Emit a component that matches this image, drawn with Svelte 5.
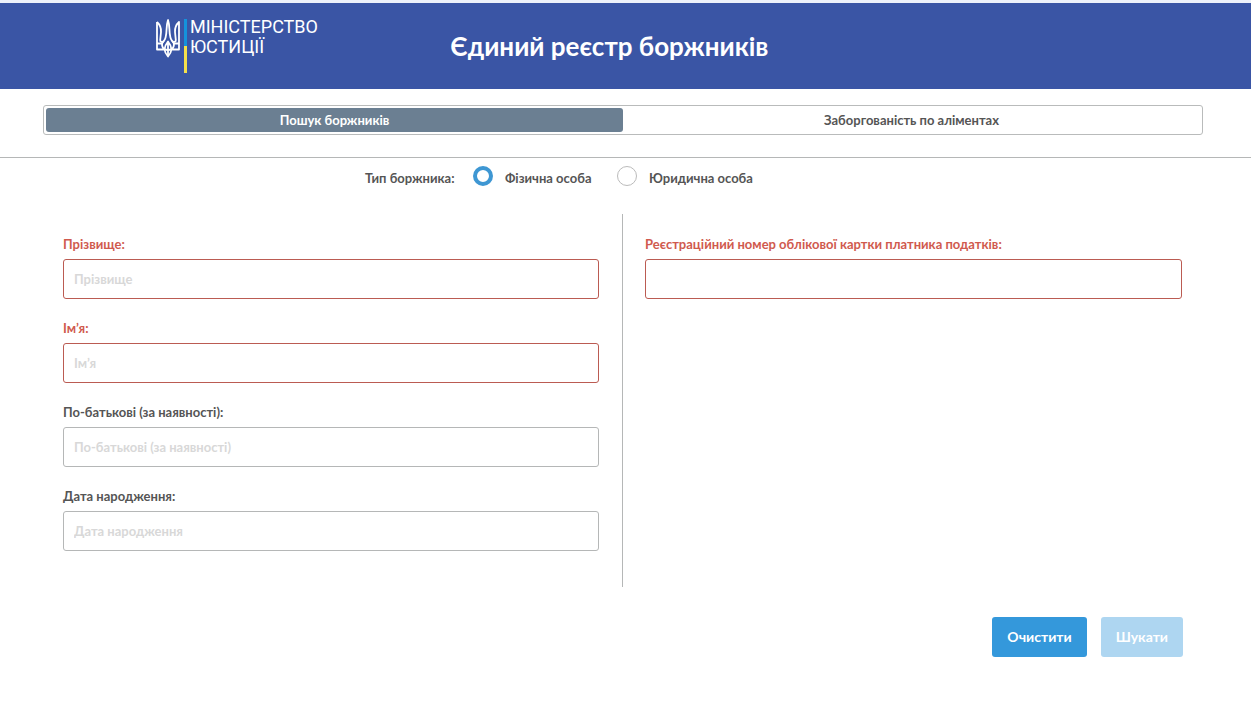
<script>
	let tab = $state('search');
	let debtorType = $state('person');
	let form = $state({ surname: '', name: '', patronymic: '', birthday: '', code: '' });

	const fields = [
		{ id: 'surname', label: 'Прізвище', required: true },
		{ id: 'name', label: 'Ім’я', required: true },
		{ id: 'patronymic', label: 'По-батькові (за наявності)', required: false },
		{ id: 'birthday', label: 'Дата народження', required: false }
	];

	const canSearch = $derived(Boolean((form.surname && form.name) || form.code));

	function clear() {
		form = { surname: '', name: '', patronymic: '', birthday: '', code: '' };
	}
</script>

<header class="header">
	<div class="logo">
		<svg class="trident" viewBox="0 0 25 40" aria-hidden="true">
			<g fill="none" stroke="#fff" stroke-width="1.8" stroke-linejoin="round">
				<!-- outer tines and base -->
				<path d="M1.500 3v27.500H9c.4 3 1.600 4.800 3.500 7 1.900-2.200 3.100-4 3.500-7h7.500V3c-3.200 3-4.300 6-4 10l.8 8c.2 2.200-2.800 2.800-3.600.8" />
				<path d="M1.500 3c3.200 3 4.300 6 4 10l-.8 8c-.2 2.200 2.800 2.800 3.600.8" />
				<!-- middle tine -->
				<path d="M12.500 1c-1 3-1.300 6-1.400 9-.2 6-.7 10.500-3.200 12.500-1.300 1.200-1.600 3-1.100 4.800.5 2.200 2.300 3.700 5.700 3.700s5.200-1.500 5.700-3.700c.5-1.800.2-3.600-1.100-4.800-2.500-2-3-6.500-3.200-12.500-.1-3-.4-6-1.400-9z" />
				<path d="M1.500 24.500h5M18.500 24.500h5M12.500 22v15M9 30.500c.1-3.200 1.500-5.500 3.500-8 2 2.500 3.400 4.800 3.500 8" />
			</g>
		</svg>
		<span class="flag"></span>
		<span class="ministry">МІНІСТЕРСТВО<br />ЮСТИЦІЇ</span>
	</div>
	<h1>Єдиний реєстр боржників</h1>
</header>

<nav class="tabs-bar">
	<div class="tabs">
		<button type="button" class:active={tab === 'search'} onclick={() => (tab = 'search')}>
			Пошук боржників
		</button>
		<button type="button" class:active={tab === 'alimony'} onclick={() => (tab = 'alimony')}>
			Заборгованість по аліментах
		</button>
	</div>
</nav>

<form class="page" onsubmit={(e) => e.preventDefault()}>
	<div class="types" role="radiogroup" aria-labelledby="type-title">
		<span id="type-title" class="types-title">Тип боржника:</span>
		<label class="option">
			<input type="radio" name="type" value="person" bind:group={debtorType} />
			<span>Фізична особа</span>
		</label>
		<label class="option">
			<input type="radio" name="type" value="company" bind:group={debtorType} />
			<span>Юридична особа</span>
		</label>
	</div>

	<div class="columns">
		<div class="column">
			{#each fields as field (field.id)}
				<div class="field" class:required={field.required}>
					<label for={field.id}>{field.label}:</label>
					<input id={field.id} type="text" placeholder={field.label} bind:value={form[field.id]} />
				</div>
			{/each}
		</div>
		<div class="column">
			<div class="field required">
				<label for="code">Реєстраційний номер облікової картки платника податків:</label>
				<input id="code" type="text" bind:value={form.code} />
			</div>
		</div>
	</div>

	<div class="actions">
		<button type="button" onclick={clear}>Очистити</button>
		<button type="submit" disabled={!canSearch}>Шукати</button>
	</div>
</form>

<style>
	:global(body) {
		background: #fff;
		color: #555;
		font-family: Lato, 'Open Sans', sans-serif;
		font-size: 13px;
		font-weight: 700;
		line-height: 16px;
	}

	button,
	input {
		box-sizing: border-box;
		margin: 0;
		font: inherit;
	}

	button {
		border: 0;
		cursor: pointer;
	}

	.header {
		display: grid;
		grid-template-columns: 36% 1fr;
		align-items: center;
		height: 86px;
		border-top: 3px solid #edf1fa;
		background: #3a55a5;
		color: #fff;
	}

	.logo {
		display: flex;
		align-items: flex-start;
		gap: 3px;
		padding-left: 155px;
	}

	.trident {
		width: 26px;
		height: 40px;
	}

	.flag {
		width: 3px;
		height: 54px;
		background: linear-gradient(#1492dc 50%, #f4e04b 50%);
	}

	.ministry {
		margin-top: -2px;
		font-family: Roboto, sans-serif;
		font-size: 18px;
		font-weight: 400;
		line-height: 20px;
	}

	h1 {
		margin: 0;
		font-size: 26px;
		line-height: 32px;
	}

	.tabs-bar {
		padding: 16px 48px 22px 43px;
		border-bottom: 1px solid #b5b7b7;
	}

	.tabs {
		display: grid;
		grid-template-columns: 1fr 1fr;
		padding: 2px;
		border: 1px solid #b9bbbb;
		border-radius: 3px;
	}

	.tabs button {
		height: 24px;
		padding: 0;
		border-radius: 3px;
		background: none;
		color: #555;
	}

	.tabs .active {
		background: #6b7f92;
		color: #fff;
	}

	.page {
		padding: 8px 48px 24px 43px;
	}

	.types {
		display: flex;
		align-items: flex-start;
		padding-left: 322px;
	}

	.types-title {
		width: 108px;
	}

	.types span {
		padding-top: 4px;
	}

	.option {
		display: flex;
		gap: 12px;
		width: 144px;
	}

	.option input {
		width: 20px;
		height: 20px;
		border: 1px solid #bbb;
		border-radius: 50%;
		background: #fff;
		appearance: none;
	}

	.option input:checked {
		border: 4px solid #3e97d3;
	}

	.columns {
		display: grid;
		grid-template-columns: 1fr 1fr;
		margin-top: 28px;
	}

	.column {
		display: flex;
		flex-direction: column;
		gap: 20px;
		padding: 21px 21px 36px 22px;
	}

	.column:first-child {
		padding: 21px 23px 36px 20px;
		border-right: 1px solid #b5b7b7;
	}

	.field label {
		display: block;
		margin-bottom: 6px;
		line-height: 18px;
	}

	.field input {
		display: block;
		width: 100%;
		height: 40px;
		padding: 0 10px;
		border: 1px solid #b5b7b7;
		border-radius: 3px;
		outline: 0;
		background: #fff;
		color: #555;
	}

	.field input::placeholder {
		color: #d8d8d8;
		opacity: 1;
	}

	.required label {
		color: #d05a4e;
	}

	.required input {
		border-color: #bb5b52;
	}

	.actions {
		display: flex;
		justify-content: flex-end;
		gap: 14px;
		margin-top: 30px;
		padding-right: 20px;
	}

	.actions button {
		height: 40px;
		padding: 0 15px;
		border-radius: 3px;
		background: #3498db;
		color: #fff;
		font-size: 14px;
	}

	.actions button:disabled {
		background: #aed6f1;
		cursor: default;
	}
</style>
